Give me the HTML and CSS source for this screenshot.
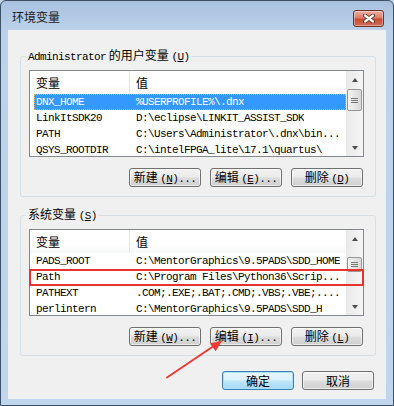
FILE: index.html
```html
<!DOCTYPE html>
<html>

<head>
    <meta charset="utf-8">
    <title>环境变量</title>
    <link rel="stylesheet" href="styles.css">
</head>

<body>
    <div class="window">
        <div class="titlebar">
            <span class="title">环境变量</span>
            <span class="close-btn">
                <svg width="12" height="9" viewBox="0 0 12 9">
                    <path d="M2 1.5 L10 7.5 M10 1.5 L2 7.5" stroke="#5b2b22" stroke-width="4" stroke-linecap="round" />
                    <path d="M2 1.5 L10 7.5 M10 1.5 L2 7.5" stroke="#ffffff" stroke-width="2.2" stroke-linecap="round" />
                </svg>
            </span>
        </div>

        <div class="client">
            <!-- user variables -->
            <fieldset class="group">
                <legend><span class="mono">Administrator</span> 的用户变量 <span class="mono">(<u>U</u>)</span></legend>
                <div class="list">
                    <div class="list-body">
                        <div class="list-head"><span class="head-name">变量</span><span class="head-value">值</span></div>
                        <div class="rows">
                            <div class="row selected"><span class="col-name">DNX_HOME</span><span class="col-value">%USERPROFILE%\.dnx</span></div>
                            <div class="row"><span class="col-name">LinkItSDK20</span><span class="col-value">D:\eclipse\LINKIT_ASSIST_SDK</span></div>
                            <div class="row"><span class="col-name">PATH</span><span class="col-value">C:\Users\Administrator\.dnx\bin...</span></div>
                            <div class="row"><span class="col-name">QSYS_ROOTDIR</span><span class="col-value">C:\intelFPGA_lite\17.1\quartus\</span></div>
                        </div>
                    </div>
                    <div class="scrollbar">
                        <div class="arrow"><span class="tri-up"></span></div>
                        <div class="track"><div class="thumb thumb-top"></div></div>
                        <div class="arrow"><span class="tri-down"></span></div>
                    </div>
                </div>
                <div class="btn-row">
                    <button class="btn">新建 <span class="mono">(<u>N</u>)...</span></button>
                    <button class="btn">编辑 <span class="mono">(<u>E</u>)...</span></button>
                    <button class="btn">删除 <span class="mono">(<u>D</u>)</span></button>
                </div>
            </fieldset>

            <!-- system variables -->
            <fieldset class="group group-system">
                <legend>系统变量 <span class="mono">(<u>S</u>)</span></legend>
                <div class="list">
                    <div class="list-body">
                        <div class="list-head"><span class="head-name">变量</span><span class="head-value">值</span></div>
                        <div class="rows">
                            <div class="row"><span class="col-name">PADS_ROOT</span><span class="col-value">C:\MentorGraphics\9.5PADS\SDD_HOME</span></div>
                            <div class="row"><span class="col-name">Path</span><span class="col-value">C:\Program Files\Python36\Scrip...</span></div>
                            <div class="row"><span class="col-name">PATHEXT</span><span class="col-value">.COM;.EXE;.BAT;.CMD;.VBS;.VBE;....</span></div>
                            <div class="row"><span class="col-name">perlintern</span><span class="col-value">C:\MentorGraphics\9.5PADS\SDD_H</span></div>
                        </div>
                    </div>
                    <div class="scrollbar">
                        <div class="arrow"><span class="tri-up"></span></div>
                        <div class="track"><div class="thumb thumb-low"></div></div>
                        <div class="arrow"><span class="tri-down"></span></div>
                    </div>
                    <div class="mark-box"></div>
                </div>
                <div class="btn-row">
                    <button class="btn">新建 <span class="mono">(<u>W</u>)...</span></button>
                    <button class="btn">编辑 <span class="mono">(<u>I</u>)...</span></button>
                    <button class="btn">删除 <span class="mono">(<u>L</u>)</span></button>
                </div>
            </fieldset>

            <div class="dialog-btns">
                <button class="btn btn-default">确定</button>
                <button class="btn">取消</button>
            </div>
        </div>

        <!-- red arrow annotation -->
        <svg class="mark-arrow" width="70" height="50" viewBox="0 0 70 50">
            <path d="M7 43.5 L53 12.5" stroke="#ec3b35" stroke-width="2" stroke-linecap="round" />
            <polygon points="62,7 55.6,17.2 50.2,9.2" fill="#ec3b35" />
        </svg>
    </div>
</body>

</html>
```

FILE: styles.css
```css
html,
body {
    margin: 0;
    background: #bfd5ec;
}

.window {
    position: relative;
    box-sizing: border-box;
    width: 394px;
    height: 406px;
    display: flex;
    flex-direction: column;
    padding: 0 7px 6px 7px;
    border: 1px solid #3e5068;
    border-radius: 6px 6px 0 0;
    background: linear-gradient(#a8c1de 0, #bcd2ea 30px, #c0d6ed 100%);
    font-family: "Noto Sans CJK SC", sans-serif;
    font-size: 12px;
    color: #000;
}

.mono {
    font-family: "Liberation Mono", monospace;
    font-size: 11px;
    letter-spacing: -0.6px;
}

/* title bar */
.titlebar {
    height: 29px;
    display: flex;
    align-items: flex-start;
    justify-content: space-between;
}

.title {
    margin: 8px 0 0 4px;
    line-height: 16px;
    font-size: 12px;
    color: #1b1b1b;
}

.close-btn {
    box-sizing: border-box;
    width: 31px;
    height: 17px;
    margin: 9px 2px 0 0;
    display: flex;
    align-items: center;
    justify-content: center;
    border: 1px solid #6e3128;
    border-radius: 3px;
    background: linear-gradient(#eab0a3 0%, #dc7d68 45%, #c64a31 55%, #d2705a 100%);
    box-shadow: inset 0 0 0 1px rgba(255, 255, 255, 0.35);
}

/* client area */
.client {
    flex: 1;
    display: flex;
    flex-direction: column;
    padding: 0 10px 0 12px;
    background: #f0f0f0;
}

.group {
    margin: 18px 0 0 0;
    min-width: 0;
    padding: 6px 11px 9px 8px;
    border: 1px solid #d5dfe5;
    border-radius: 3px;
}

.group-system {
    margin-top: 10px;
}

.group legend {
    margin-left: -3px;
    padding: 0 2px;
    line-height: 14px;
    font-size: 12px;
}

/* list view */
.list {
    position: relative;
    height: 87px;
    box-sizing: border-box;
    display: flex;
    border: 1px solid #828790;
    background: #fff;
}

.list-body {
    flex: 1;
    min-width: 0;
    overflow: hidden;
}

.list-head {
    height: 23px;
    display: flex;
    align-items: center;
    background: linear-gradient(#ffffff 0%, #ffffff 60%, #f6f7f8 100%);
}

.head-name {
    box-sizing: border-box;
    width: 100px;
    padding-left: 6px;
    line-height: 23px;
    border-right: 1px solid #e3e5e8;
}

.head-value {
    padding-left: 6px;
}

.rows {
    height: 62px;
    overflow: hidden;
}

.row {
    height: 16px;
    margin-left: 4px;
    display: flex;
    line-height: 16px;
    font-family: "Liberation Mono", monospace;
    font-size: 11px;
    letter-spacing: -0.6px;
    white-space: nowrap;
}

.row .col-name {
    width: 96px;
    padding-left: 2px;
    box-sizing: border-box;
    overflow: hidden;
}

.row .col-value {
    padding-left: 6px;
    overflow: hidden;
}

.row.selected {
    background: #3399ff;
    color: #fff;
    outline: 1px dotted #f5b04a;
    outline-offset: -1px;
}

/* scrollbar */
.scrollbar {
    width: 17px;
    display: flex;
    flex-direction: column;
    background: linear-gradient(90deg, #e8e8e8, #f6f6f6);
}

.arrow {
    height: 17px;
    display: flex;
    align-items: center;
    justify-content: center;
}

.tri-up {
    border-left: 3.5px solid transparent;
    border-right: 3.5px solid transparent;
    border-bottom: 4px solid #4d4d4d;
}

.tri-down {
    border-left: 3.5px solid transparent;
    border-right: 3.5px solid transparent;
    border-top: 4px solid #4d4d4d;
}

.track {
    flex: 1;
}

.thumb {
    box-sizing: border-box;
    margin: 0 1px;
    display: flex;
    align-items: center;
    justify-content: center;
    border: 1px solid #979797;
    border-radius: 2px;
    background: linear-gradient(90deg, #f4f4f4, #e3e3e3 60%, #d9d9d9);
}

.thumb::after {
    content: "";
    width: 7px;
    height: 5px;
    background: repeating-linear-gradient(#777 0 1px, transparent 1px 2px);
}

.thumb-top {
    height: 22px;
    margin-top: 1px;
}

.thumb-low {
    height: 15px;
    margin-top: 10px;
}

.mark-box {
    position: absolute;
    top: 39px;
    left: -1px;
    width: 335px;
    height: 17px;
    box-sizing: border-box;
    border: 2px solid #e8322e;
}

/* buttons */
.btn-row {
    margin-top: 11px;
    margin-right: 1px;
    display: flex;
    justify-content: flex-end;
    gap: 9px;
}

.btn {
    width: 72px;
    height: 19px;
    padding: 0;
    box-sizing: border-box;
    border: 1px solid #707070;
    border-radius: 3px;
    background: linear-gradient(#f2f2f2 0%, #ebebeb 48%, #dddddd 52%, #cfcfcf 100%);
    box-shadow: inset 0 0 0 1px rgba(255, 255, 255, 0.6);
    font-family: "Noto Sans CJK SC", sans-serif;
    font-size: 12px;
    line-height: 16px;
    color: #000;
    white-space: nowrap;
}

.btn-default {
    border-color: #3c7fb1;
    background: linear-gradient(#eaf6fd 0%, #d9f0fc 48%, #bee6fd 52%, #a7d9f5 100%);
    box-shadow: inset 0 0 0 1px #a6e2fa;
}

.dialog-btns {
    margin-top: 15px;
    margin-right: 2px;
    display: flex;
    justify-content: flex-end;
    gap: 8px;
}

.mark-arrow {
    position: absolute;
    left: 159px;
    top: 333px;
}
```
